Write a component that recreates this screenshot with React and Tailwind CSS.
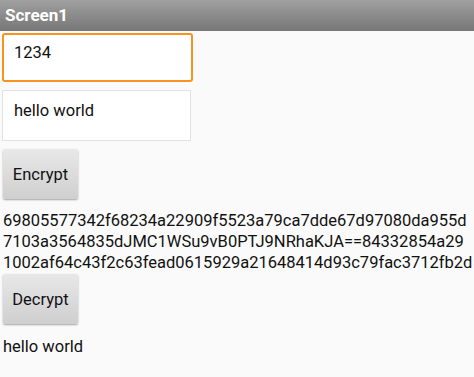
import React from 'react';

const lines = [
    '69805577342f68234a22909f5523a79ca7dde67d97080da955d',
    '7103a3564835dJMC1WSu9vB0PTJ9NRhaKJA==84332854a29',
    '1002af64c43f2c63fead0615929a21648414d93c79fac3712fb2d',
];

const btn = 'ml-[3px] w-[75px] h-[50px] shrink-0 rounded-[2px] bg-gradient-to-b from-[#e8e8e8] to-[#cfcfcf] shadow-[0_1px_2px_rgba(0,0,0,0.35)] text-[16.5px]/[21px] text-center text-[#111]';

const App = () => {
    return (
        <div className="w-[474px] h-[377px] overflow-hidden bg-[#fafafa] text-[#111]" style={{ fontFamily: 'Roboto, "Liberation Sans", sans-serif' }}>
            {/* title bar */}
            <div className="h-[31px] bg-gradient-to-b from-[#a0a0a0] to-[#777777] flex items-center px-[5px]">
                <span className="text-white font-bold text-[17px]">Screen1</span>
            </div>

            <div className="flex flex-col text-[16.5px]/[21px]">
                <div className="ml-[2px] mt-[2px] w-[191px] h-[49px] shrink-0 border-2 border-[#f7931e] rounded-[3px] bg-white pl-[10px] pt-[7px]">
                    1234
                </div>
                <div className="ml-[2px] mt-[8px] w-[189px] h-[51px] shrink-0 border border-[#e2e2e2] bg-white pl-[11px] pt-[9px]">
                    hello world
                </div>
                <button className={`${btn} mt-[8px]`}>Encrypt</button>
                <div className="mt-[11px] pl-[3px] whitespace-nowrap">
                    {lines.map((l) => (
                        <div key={l} className="h-[21px]">{l}</div>
                    ))}
                </div>
                <button className={`${btn} mt-[1px]`}>Decrypt</button>
                <div className="mt-[12px] pl-[3px] h-[21px]">hello world</div>
            </div>
        </div>
    );
};

export default App;
